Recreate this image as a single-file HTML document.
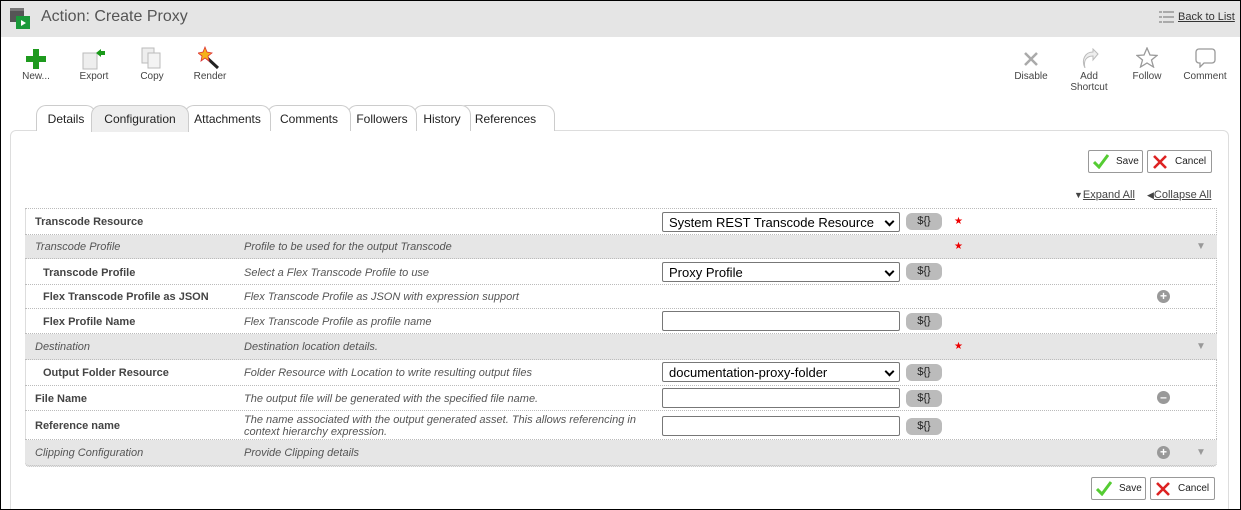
<!DOCTYPE html>
<html style="overflow:hidden;height:510px"><head><meta charset="utf-8"><style>
*{box-sizing:border-box}
html,body{margin:0;width:1241px;height:510px;overflow:hidden}
body{position:relative;font-family:"Liberation Sans",Arial,sans-serif;background:#fff;color:#333}
.frame{position:absolute;left:0;top:0;width:1241px;height:510px;border:1px solid #000;pointer-events:none;z-index:10}
.hdr{position:absolute;left:0;top:0;width:1241px;height:37px;background:#e5e5e5}
.title{position:absolute;left:41px;top:8px;font-size:16px;color:#555}
.back{position:absolute;left:1178px;top:11px;font-size:11px;color:#333;text-decoration:underline}
.tb{position:absolute;font-size:10px;color:#444;text-align:center;width:60px}
.tab{position:absolute;top:105px;height:26px;border:1px solid #ccc;border-bottom:none;border-radius:10px 10px 0 0;background:#fff;font-size:12px;color:#222;padding:6px 0 0;text-align:center}
.panel{position:absolute;left:10px;top:130px;width:1219px;height:395px;border:1px solid #ddd;border-radius:6px;background:#fff}
.btn{position:absolute;height:23px;border:1px solid #999;border-radius:2px;background:#fff;font-size:10px;color:#222}
.row{position:absolute;left:25px;width:1192px;border-bottom:1px dotted #bbb;font-size:11px}
.g{background:#e6e6e6}
.lab{position:absolute;left:10px;font-weight:bold;color:#444}
.glab{position:absolute;left:10px;font-style:italic;color:#555}
.desc{position:absolute;left:219px;font-style:italic;color:#555;width:410px;line-height:12px}
.inp{position:absolute;left:637px;width:238px;height:20px;border:1px solid #777;border-radius:2px;background:#fff;font-size:13px;color:#000;padding:2px 6px}
.sel::after{content:"";position:absolute;right:6px;top:5px;width:5px;height:5px;border-right:2px solid #000;border-bottom:2px solid #000;transform:rotate(45deg)}
.ex{position:absolute;left:881px;width:36px;height:17px;background:#bbb;border-radius:6px;font-size:11px;color:#222;text-align:center;line-height:17px}
.star{position:absolute;left:929px;color:#e00;font-size:10px}
.circ{position:absolute;left:1132px;width:13px;height:13px;border-radius:50%;background:#999;color:#fff;font-size:12px;line-height:12px;text-align:center;font-weight:bold}
.tri{position:absolute;left:1171px;color:#999;font-size:10px}
</style></head><body>
<div class="hdr"></div>
<svg style="position:absolute;left:10px;top:8px" width="22" height="22"><rect x="0" y="2" width="14" height="12" fill="#555"/><rect x="0" y="0" width="14" height="3" fill="#777"/><rect x="6" y="8" width="14" height="13" fill="#1a9a3a"/><path d="M11 12 L16 15 L11 18 Z" fill="#fff"/></svg>
<div class="title">Action: Create Proxy</div>
<svg style="position:absolute;left:1159px;top:11px" width="15" height="12"><g fill="#aaa"><rect x="0" y="0" width="3" height="2"/><rect x="4" y="0" width="11" height="2"/><rect x="0" y="5" width="3" height="2"/><rect x="4" y="5" width="11" height="2"/><rect x="0" y="10" width="3" height="2"/><rect x="4" y="10" width="11" height="2"/></g></svg>
<div class="back">Back to List</div>

<svg style="position:absolute;left:26px;top:49px" width="20" height="20"><path d="M7 0h6v7h7v6h-7v7h-6v-7h-7v-6h7z" fill="#1e9a1e"/></svg>
<div class="tb" style="left:6px;top:71px">New...</div>
<svg style="position:absolute;left:82px;top:48px" width="24" height="22"><rect x="1" y="5" width="14" height="16" fill="#eee" stroke="#bbb"/><path d="M14 5l5-4v2h4v4h-4v2z" fill="#1a9a1a"/></svg>
<div class="tb" style="left:64px;top:71px">Export</div>
<svg style="position:absolute;left:141px;top:47px" width="22" height="22"><rect x="1" y="1" width="12" height="15" fill="#eee" stroke="#bbb"/><rect x="7" y="6" width="12" height="15" fill="#f3f3f3" stroke="#bbb"/></svg>
<div class="tb" style="left:122px;top:71px">Copy</div>
<svg style="position:absolute;left:198px;top:46px" width="24" height="24"><path d="M7 10L20 22" stroke="#222" stroke-width="3"/><path d="M7 1l2 5 5 1-4 3 1 5-4-3-4 3 1-5-4-3 5-1z" fill="#f5b21a" stroke="#d33" stroke-width=".8"/></svg>
<div class="tb" style="left:180px;top:71px">Render</div>

<svg style="position:absolute;left:1024px;top:52px" width="14" height="14"><path d="M1 1L13 13M13 1L1 13" stroke="#aaa" stroke-width="2.5"/></svg>
<div class="tb" style="left:1001px;top:71px">Disable</div>
<svg style="position:absolute;left:1081px;top:48px" width="18" height="20"><path d="M4 20C2 12 6 8 12 8V12L17 6 12 1V4C4 4 0 12 4 20z" fill="#eee" stroke="#bbb"/></svg>
<div class="tb" style="left:1059px;top:71px;line-height:11px">Add<br>Shortcut</div>
<svg style="position:absolute;left:1136px;top:47px" width="22" height="21"><path d="M11 1l3 7 7 .5-5.5 4.5 2 7-6.5-4-6.5 4 2-7L1 8.5 8 8z" fill="none" stroke="#999" stroke-width="1.3"/></svg>
<div class="tb" style="left:1117px;top:71px">Follow</div>
<svg style="position:absolute;left:1195px;top:48px" width="22" height="20"><path d="M4 1h13a3 3 0 013 3v8a3 3 0 01-3 3H9l-4 4v-4H4a3 3 0 01-3-3V4a3 3 0 013-3z" fill="none" stroke="#999" stroke-width="1.3"/></svg>
<div class="tb" style="left:1175px;top:71px">Comment</div>

<div class="panel"></div>
<div class="tab" style="left:36px;width:60px">Details</div>
<div class="tab" style="left:456px;width:99px">References</div>
<div class="tab" style="left:413px;width:58px">History</div>
<div class="tab" style="left:347px;width:70px">Followers</div>
<div class="tab" style="left:267px;width:84px">Comments</div>
<div class="tab" style="left:184px;width:87px">Attachments</div>
<div class="tab" style="left:91px;width:98px;background:#eee;height:27px">Configuration</div>

<div class="btn" style="left:1088px;top:150px;width:55px"><svg style="position:absolute;left:4px;top:3px" width="16" height="15"><path d="M1 8l5 5L15 1" fill="none" stroke="#5c3" stroke-width="3"/></svg><span style="position:absolute;left:27px;top:5px">Save</span></div>
<div class="btn" style="left:1147px;top:150px;width:65px"><svg style="position:absolute;left:5px;top:4px" width="14" height="14"><path d="M1 1L13 13M13 1L1 13" stroke="#d22" stroke-width="2.6"/></svg><span style="position:absolute;left:27px;top:5px">Cancel</span></div>
<div style="position:absolute;left:1074px;top:189px;font-size:11px;color:#444"><span style="font-size:9px">▼</span><u>Expand All</u></div>
<div style="position:absolute;left:1147px;top:189px;font-size:11px;color:#444"><span style="font-size:9px">◀</span><u>Collapse All</u></div>

<div style="position:absolute;left:25px;top:208px;width:1192px;height:259px;border:1px dotted #bbb;border-radius:0 0 4px 4px"></div>

<div class="row" style="top:209px;height:26px"><div class="lab" style="top:7px">Transcode Resource</div><div class="inp sel" style="top:3px">System REST Transcode Resource</div><div class="ex" style="top:4px">${}</div><div class="star" style="top:7px">★</div></div>
<div class="row g" style="top:235px;height:24px"><div class="glab" style="top:6px">Transcode Profile</div><div class="desc" style="top:6px">Profile to be used for the output Transcode</div><div class="star" style="top:6px">★</div><div class="tri" style="top:6px">▼</div></div>
<div class="row" style="top:259px;height:26px"><div class="lab" style="left:18px;top:8px">Transcode Profile</div><div class="desc" style="top:8px">Select a Flex Transcode Profile to use</div><div class="inp sel" style="top:3px">Proxy Profile</div><div class="ex" style="top:4px">${}</div></div>
<div class="row" style="top:285px;height:24px"><div class="lab" style="left:18px;top:6px">Flex Transcode Profile as JSON</div><div class="desc" style="top:6px">Flex Transcode Profile as JSON with expression support</div><div class="circ" style="top:5px">+</div></div>
<div class="row" style="top:309px;height:25px"><div class="lab" style="left:18px;top:7px">Flex Profile Name</div><div class="desc" style="top:7px">Flex Transcode Profile as profile name</div><div class="inp" style="top:2px"></div><div class="ex" style="top:4px">${}</div></div>
<div class="row g" style="top:334px;height:26px"><div class="glab" style="top:7px">Destination</div><div class="desc" style="top:7px">Destination location details.</div><div class="star" style="top:7px">★</div><div class="tri" style="top:7px">▼</div></div>
<div class="row" style="top:360px;height:26px"><div class="lab" style="left:18px;top:7px">Output Folder Resource</div><div class="desc" style="top:7px">Folder Resource with Location to write resulting output files</div><div class="inp sel" style="top:2px">documentation-proxy-folder</div><div class="ex" style="top:4px">${}</div></div>
<div class="row" style="top:386px;height:25px"><div class="lab" style="top:7px">File Name</div><div class="desc" style="top:7px">The output file will be generated with the specified file name.</div><div class="inp" style="top:2px"></div><div class="ex" style="top:4px">${}</div><div class="circ" style="top:5px">–</div></div>
<div class="row" style="top:411px;height:29px"><div class="lab" style="top:9px">Reference name</div><div class="desc" style="top:3px">The name associated with the output generated asset. This allows referencing in context hierarchy expression.</div><div class="inp" style="top:5px"></div><div class="ex" style="top:7px">${}</div></div>
<div class="row g" style="top:440px;height:26px;border-radius:0 0 4px 4px"><div class="glab" style="top:7px">Clipping Configuration</div><div class="desc" style="top:7px">Provide Clipping details</div><div class="circ" style="top:6px">+</div><div class="tri" style="top:7px">▼</div></div>

<div class="btn" style="left:1091px;top:477px;width:55px"><svg style="position:absolute;left:4px;top:3px" width="16" height="15"><path d="M1 8l5 5L15 1" fill="none" stroke="#5c3" stroke-width="3"/></svg><span style="position:absolute;left:27px;top:5px">Save</span></div>
<div class="btn" style="left:1150px;top:477px;width:65px"><svg style="position:absolute;left:5px;top:4px" width="14" height="14"><path d="M1 1L13 13M13 1L1 13" stroke="#d22" stroke-width="2.6"/></svg><span style="position:absolute;left:27px;top:5px">Cancel</span></div>
<div class="frame"></div>
</body></html>
